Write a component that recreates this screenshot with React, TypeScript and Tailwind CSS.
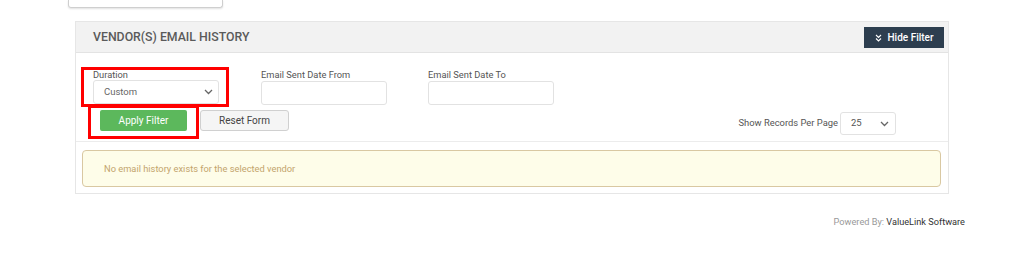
import React from "react";

function ChevronDown({ className = "" }: { className?: string }) {
  return (
    <svg className={className} width="9" height="6" viewBox="0 0 9 6" fill="none">
      <path d="M1 1l3.5 3.5L8 1" stroke="#666" strokeWidth="1.3" />
    </svg>
  );
}

export default function App() {
  return (
    <div
      className="w-[1024px] h-[279px] bg-white overflow-hidden"
      style={{ fontFamily: "Roboto, 'Noto Sans', Arial, sans-serif" }}
    >
      {/* remnant of a menu at top */}
      <div className="ml-[68px] w-[155px] h-[8px] border-x border-b border-[#cfcfcf] rounded-b-[3px] shadow-[0_1px_2px_rgba(0,0,0,0.12)]" />

      {/* panel */}
      <div className="ml-[75px] mt-[13px] w-[874px] border border-[#e6e6e6]">
        <div className="h-[31px] bg-[#f2f2f2] border-b border-[#e3e3e3] flex items-center justify-between pl-[17px] pr-[4px]">
          <span className="text-[12.3px] text-[#5a5a5a] font-medium">VENDOR(S) EMAIL HISTORY</span>
          <button className="h-[21px] w-[80px] bg-[#2d3e4f] text-white text-[10px] font-medium flex items-center justify-center gap-[6px] mt-[1px]">
            <svg width="7" height="8" viewBox="0 0 7 8" fill="none">
              <path d="M1 1l2.5 2.5L6 1M1 4.5L3.5 7 6 4.5" stroke="#fff" strokeWidth="1.1" />
            </svg>
            Hide Filter
          </button>
        </div>

        <div className="relative">
          {/* red annotation boxes */}
          <div className="absolute left-[5px] top-[14px] w-[148px] h-[40px] border-[3px] border-[#f00] pointer-events-none" />
          <div className="absolute left-[12px] top-[52px] w-[111px] h-[34px] border-[3px] border-[#f00] pointer-events-none" />

          <div className="pl-[17px] pr-[52px] pt-[16px]">
            <div className="flex">
              <div className="w-[168px]">
                <div className="text-[9.3px] text-[#555] leading-[12px]">Duration</div>
                <div className="mt-[-1px] w-[126px] h-[24px] border border-[#e2e2e2] rounded-[3px] flex items-center justify-between pl-[10px] pr-[5px]">
                  <span className="text-[9.5px] text-[#666]">Custom</span>
                  <ChevronDown />
                </div>
              </div>
              <div className="w-[167px]">
                <div className="text-[9.3px] text-[#555] leading-[12px]">Email Sent Date From</div>
                <div className="w-[126px] h-[24px] border border-[#e2e2e2] rounded-[3px]" />
              </div>
              <div className="w-[167px]">
                <div className="text-[9.3px] text-[#555] leading-[12px]">Email Sent Date To</div>
                <div className="w-[126px] h-[24px] border border-[#e2e2e2] rounded-[3px]" />
              </div>
            </div>

            <div className="flex items-start justify-between mt-[5px]">
              <div className="flex gap-[13px] pl-[7px]">
                <button className="w-[87px] h-[21px] bg-[#5cb85c] rounded-[2px] text-white text-[10px]">Apply Filter</button>
                <button className="w-[89px] h-[21px] bg-[#f5f5f5] border border-[#d0d0d0] rounded-[3px] text-[#444] text-[10px]">Reset Form</button>
              </div>
              <div className="flex items-center gap-[2px] mt-[2px]">
                <span className="text-[9.4px] text-[#555]">Show Records Per Page</span>
                <div className="w-[56px] h-[23px] border border-[#e2e2e2] rounded-[3px] flex items-center justify-between pl-[10px] pr-[6px]">
                  <span className="text-[9.5px] text-[#555]">25</span>
                  <ChevronDown />
                </div>
              </div>
            </div>
          </div>

          <div className="mt-[6px] border-t border-[#ececec] px-[6px] pt-[8px] pb-[6px]">
            <div className="h-[37px] mr-[1px] bg-[#fefde9] border border-[#d9c8a2] rounded-[4px] flex items-center pl-[21px]">
              <span className="text-[9.3px] text-[#c3a46c]">No email history exists for the selected vendor</span>
            </div>
          </div>
        </div>
      </div>

      <div className="w-[965px] flex justify-end mt-[21px] text-[9.2px]">
        <span className="text-[#999]">Powered By:&nbsp;</span>
        <span className="text-[#333]">ValueLink Software</span>
      </div>
    </div>
  );
}
